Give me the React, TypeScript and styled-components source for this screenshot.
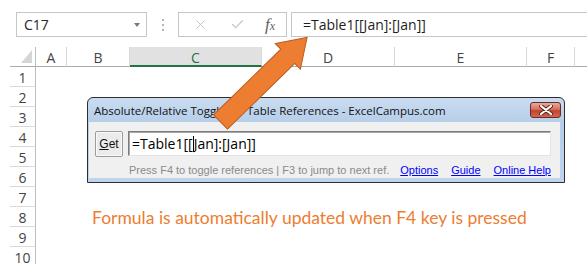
import styled, { createGlobalStyle } from "styled-components";
import { X, Check } from "lucide-react";

const GlobalStyle = createGlobalStyle`
  html, body {
    margin: 0;
    padding: 0;
    background: #fff;
  }
  body {
    font-family: "Open Sans", "Noto Sans", sans-serif;
    overflow: hidden;
  }
`;

const columns = [
  { id: "A", width: 31 },
  { id: "B", width: 63 },
  { id: "C", width: 132 },
  { id: "D", width: 133 },
  { id: "E", width: 132 },
  { id: "F", width: 48 },
  { id: "", width: 60 },
];

const rows = [1, 2, 3, 4, 5, 6, 7, 8, 9, 10];
const formula = "=Table1[[Jan]:[Jan]]";

const App = () => {
  return (
    <Page>
      <GlobalStyle />
      <FormulaBar>
        <NameBox>
          C17
          <DropArrow />
        </NameBox>
        <Grip>
          <Dot />
          <Dot />
          <Dot />
        </Grip>
        <FxBox>
          <IconSlot $offset={14}>
            <X size={15} strokeWidth={1.6} color="#c3c3c3" />
          </IconSlot>
          <IconSlot $offset={22}>
            <Check size={15} strokeWidth={1.8} color="#c3c3c3" />
          </IconSlot>
          <Fx>
            f<small>x</small>
          </Fx>
        </FxBox>
        <FormulaInput>{formula}</FormulaInput>
      </FormulaBar>

      <HeaderRow>
        <Gutter />
        <Corner>
          <svg width="11" height="13" viewBox="0 0 11 13">
            <polygon points="11,0 11,13 0,13" fill="#d6d6d6" />
          </svg>
        </Corner>
        {columns.map((c) => (
          <ColHeader key={c.id} $width={c.width} $selected={c.id === "C"}>
            {c.id}
          </ColHeader>
        ))}
      </HeaderRow>

      <SheetBody>
        <Gutter />
        <RowHeaders>
          {rows.map((r) => (
            <RowHeader key={r}>{r}</RowHeader>
          ))}
        </RowHeaders>
        <CellArea>
          {rows.map((r) => (
            <CellRow key={r}>
              {r === 8 && (
                <Note>Formula is automatically updated when F4 key is pressed</Note>
              )}
            </CellRow>
          ))}

          <Dialog>
            <TitleBar>
              <Title>Absolute/Relative Toggle for Table References - ExcelCampus.com</Title>
              <CloseButton>
                <svg width="14" height="10" viewBox="0 0 14 10">
                  <path d="M2 1 L12 9 M12 1 L2 9" stroke="#5b2318" strokeWidth="4" strokeLinecap="round" />
                  <path d="M2 1 L12 9 M12 1 L2 9" stroke="#fff" strokeWidth="2.2" strokeLinecap="round" />
                </svg>
              </CloseButton>
            </TitleBar>
            <DialogBody>
              <InputRow>
                <GetButton>
                  <u>G</u>et
                </GetButton>
                <RefInput>
                  =Table1[[
                  <Caret />
                  Jan]:[Jan]]
                </RefInput>
              </InputRow>
              <HintRow>
                <Hint>Press F4 to toggle references | F3 to jump to next ref.</Hint>
                <Links>
                  <Link>Options</Link>
                  <Link>Guide</Link>
                  <Link>Online Help</Link>
                </Links>
              </HintRow>
            </DialogBody>
          </Dialog>
        </CellArea>
      </SheetBody>

      <ArrowLayer width={587} height={264} viewBox="0 0 587 264">
        <g transform="translate(220.5 122) rotate(-44.3)">
          <polygon
            points="0,-10 94,-10 94,-18 121,0 94,18 94,10 0,10"
            fill="#ed7d31"
            stroke="#b95b1e"
            strokeWidth={1}
          />
        </g>
      </ArrowLayer>
    </Page>
  );
};

export default App;

const Page = styled.div`
  position: relative;
  width: 587px;
  height: 264px;
  overflow: hidden;
  background: #fff;
`;

const FormulaBar = styled.div`
  display: flex;
  align-items: flex-start;
  height: 47px;
  padding: 12px 0 0 16px;
  box-sizing: border-box;
`;

const NameBox = styled.div`
  display: flex;
  align-items: center;
  justify-content: space-between;
  width: 131px;
  height: 25px;
  box-sizing: border-box;
  border: 1px solid #c6c6c6;
  padding: 0 6px 0 7px;
  font-size: 14px;
  color: #262626;
`;

const DropArrow = styled.span`
  width: 0;
  height: 0;
  border-left: 3.5px solid transparent;
  border-right: 3.5px solid transparent;
  border-top: 4px solid #7a7a7a;
`;

const Grip = styled.div`
  width: 31px;
  height: 25px;
  display: flex;
  flex-direction: column;
  align-items: center;
  justify-content: center;
  gap: 3px;
`;

const Dot = styled.span`
  width: 2px;
  height: 2px;
  background: #b4b4b4;
`;

const FxBox = styled.div`
  display: flex;
  align-items: center;
  width: 109px;
  height: 25px;
  box-sizing: border-box;
  border: 1px solid #c6c6c6;
`;

const IconSlot = styled.span<{ $offset: number }>`
  display: flex;
  margin-left: ${(p) => p.$offset}px;
`;

const Fx = styled.span`
  margin-left: 20px;
  font-family: "Liberation Serif", serif;
  font-style: italic;
  font-size: 17px;
  color: #5f5f5f;
  line-height: 1;

  small {
    font-size: 12px;
  }
`;

const FormulaInput = styled.div`
  flex: 1;
  margin-left: 4px;
  height: 25px;
  box-sizing: border-box;
  border: 1px solid #c6c6c6;
  border-right: none;
  padding-left: 11px;
  font-size: 14px;
  line-height: 23px;
  color: #1e1e1e;
  white-space: nowrap;
`;

const HeaderRow = styled.div`
  display: flex;
  height: 20px;
`;

const Gutter = styled.div`
  width: 10px;
  flex-shrink: 0;
`;

const Corner = styled.div`
  width: 26px;
  flex-shrink: 0;
  box-sizing: border-box;
  border-right: 1px solid #bdbdbd;
  border-bottom: 1px solid #ababab;
  display: flex;
  align-items: flex-end;
  justify-content: flex-end;
  padding: 0 3px 3px 0;
`;

const ColHeader = styled.div<{ $width: number; $selected: boolean }>`
  width: ${(p) => p.$width}px;
  flex-shrink: 0;
  box-sizing: border-box;
  border-right: 1px solid #d9d9d9;
  border-bottom: ${(p) => (p.$selected ? "2px solid #217346" : "1px solid #ababab")};
  background: ${(p) => (p.$selected ? "#e1e1e1" : "#fff")};
  color: ${(p) => (p.$selected ? "#217346" : "#444")};
  font-size: 14px;
  line-height: 20px;
  text-align: center;
  padding-top: 1px;
`;

const SheetBody = styled.div`
  display: flex;
`;

const RowHeaders = styled.div`
  width: 26px;
  flex-shrink: 0;
`;

const RowHeader = styled.div`
  height: 20px;
  box-sizing: border-box;
  border-right: 1px solid #bdbdbd;
  border-bottom: 1px solid #d9d9d9;
  font-size: 14px;
  line-height: 21px;
  color: #444;
  text-align: center;
`;

const CellArea = styled.div`
  position: relative;
  flex: 1;
`;

const CellRow = styled.div`
  height: 20px;
  display: flex;
  align-items: center;
`;

const Note = styled.span`
  padding-left: 56px;
  font-family: "Lato", "Open Sans", sans-serif;
  font-size: 17.5px;
  color: #ed7d31;
  white-space: nowrap;
`;

const Dialog = styled.div`
  position: absolute;
  left: 51px;
  top: 30px;
  width: 478px;
  height: 86px;
  box-sizing: border-box;
  border: 1px solid #2e2e2e;
  border-radius: 6px 6px 0 0;
  background: linear-gradient(#cadcf1, #b6cee9 24px, #bfd4ed);
  display: flex;
  flex-direction: column;
  padding: 0 4px 4px 1px;
`;

const TitleBar = styled.div`
  display: flex;
  align-items: center;
  height: 24px;
  padding-left: 5px;
`;

const Title = styled.span`
  font-size: 11.5px;
  color: #111;
  white-space: nowrap;
`;

const CloseButton = styled.div`
  margin-left: auto;
  margin-right: -1px;
  width: 31px;
  height: 16px;
  box-sizing: border-box;
  border: 1px solid #6e2b22;
  border-radius: 3px;
  background: linear-gradient(#e7ab9d, #d4705f 45%, #c4432f 55%, #cf6652);
  display: flex;
  align-items: center;
  justify-content: center;
`;

const DialogBody = styled.div`
  flex: 1;
  background: #f0f0f0;
  padding: 9px 9px 0 6px;
  display: flex;
  flex-direction: column;
`;

const InputRow = styled.div`
  display: flex;
  align-items: flex-start;
  gap: 5px;
`;

const GetButton = styled.div`
  width: 28px;
  height: 26px;
  box-sizing: border-box;
  border: 1px solid #9c9c9c;
  border-radius: 2px;
  background: #ebebeb;
  box-shadow: inset 0 0 0 1px #fbfbfb;
  font-family: "Liberation Sans", Arial, sans-serif;
  font-size: 12px;
  line-height: 24px;
  text-align: center;
  color: #111;
`;

const RefInput = styled.div`
  flex: 1;
  height: 25px;
  box-sizing: border-box;
  border: 1px solid;
  border-color: #7c7c7c #e3e3e3 #e3e3e3 #7c7c7c;
  box-shadow: inset 1px 1px 0 #a8a8a8;
  background: #fff;
  padding-left: 3px;
  font-size: 14px;
  line-height: 22px;
  color: #000;
  white-space: nowrap;
  display: flex;
  align-items: center;
`;

const Caret = styled.span`
  display: inline-block;
  width: 1px;
  height: 16px;
  background: #000;
`;

const HintRow = styled.div`
  display: flex;
  align-items: center;
  margin-top: 6px;
  padding-left: 34px;
  font-family: "Liberation Sans", Arial, sans-serif;
  font-size: 11px;
  line-height: 14px;
`;

const Hint = styled.span`
  color: #8a8a8a;
  white-space: nowrap;
`;

const Links = styled.div`
  display: flex;
  gap: 13px;
  margin-left: auto;
`;

const Link = styled.span`
  color: #0000ff;
  text-decoration: underline;
  white-space: nowrap;
`;

const ArrowLayer = styled.svg`
  position: absolute;
  left: 0;
  top: 0;
  pointer-events: none;
`;
